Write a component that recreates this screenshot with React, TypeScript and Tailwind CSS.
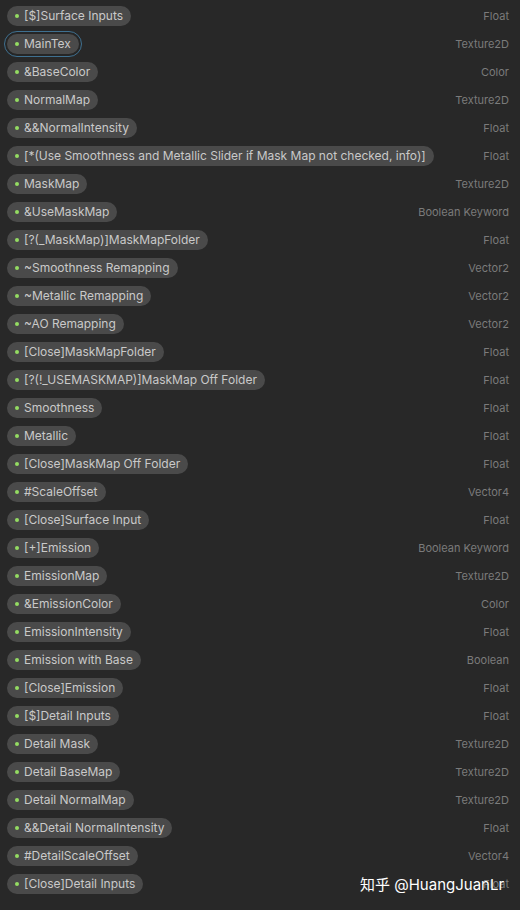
import React from 'react';

interface Prop {
  name: string;
  type: string;
  selected?: boolean;
}

const props: Prop[] = [
  { name: '[$]Surface Inputs', type: 'Float' },
  { name: 'MainTex', type: 'Texture2D', selected: true },
  { name: '&BaseColor', type: 'Color' },
  { name: 'NormalMap', type: 'Texture2D' },
  { name: '&&NormalIntensity', type: 'Float' },
  { name: '[*(Use Smoothness and Metallic Slider if Mask Map not checked, info)]', type: 'Float' },
  { name: 'MaskMap', type: 'Texture2D' },
  { name: '&UseMaskMap', type: 'Boolean Keyword' },
  { name: '[?(_MaskMap)]MaskMapFolder', type: 'Float' },
  { name: '~Smoothness Remapping', type: 'Vector2' },
  { name: '~Metallic Remapping', type: 'Vector2' },
  { name: '~AO Remapping', type: 'Vector2' },
  { name: '[Close]MaskMapFolder', type: 'Float' },
  { name: '[?(!_USEMASKMAP)]MaskMap Off Folder', type: 'Float' },
  { name: 'Smoothness', type: 'Float' },
  { name: 'Metallic', type: 'Float' },
  { name: '[Close]MaskMap Off Folder', type: 'Float' },
  { name: '#ScaleOffset', type: 'Vector4' },
  { name: '[Close]Surface Input', type: 'Float' },
  { name: '[+]Emission', type: 'Boolean Keyword' },
  { name: 'EmissionMap', type: 'Texture2D' },
  { name: '&EmissionColor', type: 'Color' },
  { name: 'EmissionIntensity', type: 'Float' },
  { name: 'Emission with Base', type: 'Boolean' },
  { name: '[Close]Emission', type: 'Float' },
  { name: '[$]Detail Inputs', type: 'Float' },
  { name: 'Detail Mask', type: 'Texture2D' },
  { name: 'Detail BaseMap', type: 'Texture2D' },
  { name: 'Detail NormalMap', type: 'Texture2D' },
  { name: '&&Detail NormalIntensity', type: 'Float' },
  { name: '#DetailScaleOffset', type: 'Vector4' },
  { name: '[Close]Detail Inputs', type: 'Float' },
];

const Pill: React.FC<{ prop: Prop }> = ({ prop }) => {
  const pill = (
    <div className="h-[20px] rounded-full bg-[#4a4a4a] flex items-center pl-[8px] pr-[8px] gap-[5px] whitespace-nowrap">
      <span className="w-[4px] h-[4px] rounded-full bg-[#94dc62] shrink-0" />
      <span className="text-[12px] text-[#c9c9c9] leading-none">{prop.name}</span>
    </div>
  );
  if (prop.selected) {
    return (
      <div className="ml-[4px] rounded-full border border-[#3f7090] p-[2px] bg-[#262626]">{pill}</div>
    );
  }
  return <div className="ml-[7px]">{pill}</div>;
};

const App: React.FC = () => {
  return (
    <div
      className="relative w-[520px] h-[910px] bg-[#282828] pt-[2px] overflow-hidden"
      style={{ fontFamily: 'Inter, "Noto Sans CJK SC", sans-serif' }}
    >
      {props.map((p, i) => (
        <div key={i} className="h-[28px] flex items-center justify-between pr-[11px]">
          <Pill prop={p} />
          <span className="text-[11px] text-[#7b7b7b] whitespace-nowrap">{p.type}</span>
        </div>
      ))}

      {/* watermark */}
      <div className="absolute left-[360px] top-[874px] text-[15px] text-white whitespace-nowrap">
        知乎 @HuangJuanLr
      </div>
    </div>
  );
};

export default App;
